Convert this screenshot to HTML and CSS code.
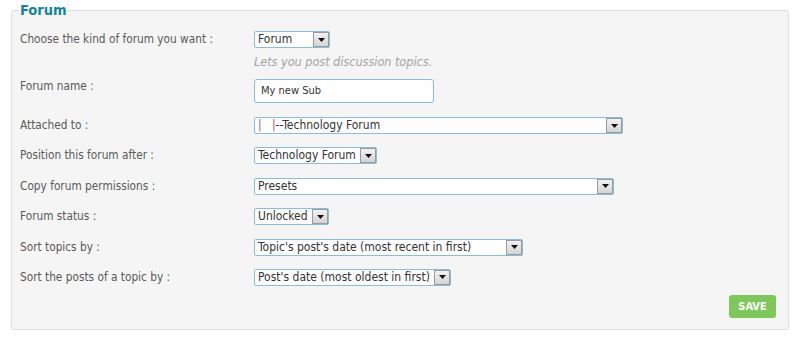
FILE: index.html
```html
<!DOCTYPE html>
<html>
<head>
<meta charset="utf-8">
<link rel="stylesheet" href="styles.css">
</head>
<body>
<form class="page">
  <fieldset class="box">
    <legend class="legend">Forum</legend>

    <div class="row row-first">
      <div class="label">Choose the kind of forum you want :</div>
      <div class="field">
        <div class="select w-type"><span class="val">Forum</span><span class="arrow"><svg width="7" height="4" viewBox="0 0 7 4"><path d="M0 0H7L3.5 4Z" fill="#111"/></svg></span></div>
        <div class="help">Lets you post discussion topics.</div>
      </div>
    </div>

    <div class="row row-input">
      <div class="label">Forum name :</div>
      <div class="field"><div class="input">My new Sub</div></div>
    </div>

    <div class="row">
      <div class="label">Attached to :</div>
      <div class="field"><div class="select w-attached"><span class="val"><span class="pipe">|</span>&nbsp;&nbsp;&nbsp;<span class="pipe">|</span>--Technology Forum</span><span class="arrow"><svg width="7" height="4" viewBox="0 0 7 4"><path d="M0 0H7L3.5 4Z" fill="#111"/></svg></span></div></div>
    </div>

    <div class="row">
      <div class="label">Position this forum after :</div>
      <div class="field"><div class="select w-pos"><span class="val">Technology Forum</span><span class="arrow"><svg width="7" height="4" viewBox="0 0 7 4"><path d="M0 0H7L3.5 4Z" fill="#111"/></svg></span></div></div>
    </div>

    <div class="row">
      <div class="label">Copy forum permissions :</div>
      <div class="field"><div class="select w-perm"><span class="val">Presets</span><span class="arrow"><svg width="7" height="4" viewBox="0 0 7 4"><path d="M0 0H7L3.5 4Z" fill="#111"/></svg></span></div></div>
    </div>

    <div class="row">
      <div class="label">Forum status :</div>
      <div class="field"><div class="select w-status"><span class="val">Unlocked</span><span class="arrow"><svg width="7" height="4" viewBox="0 0 7 4"><path d="M0 0H7L3.5 4Z" fill="#111"/></svg></span></div></div>
    </div>

    <div class="row">
      <div class="label">Sort topics by :</div>
      <div class="field"><div class="select w-sort"><span class="val">Topic's post's date (most recent in first)</span><span class="arrow"><svg width="7" height="4" viewBox="0 0 7 4"><path d="M0 0H7L3.5 4Z" fill="#111"/></svg></span></div></div>
    </div>

    <div class="row">
      <div class="label">Sort the posts of a topic by :</div>
      <div class="field"><div class="select w-posts"><span class="val">Post's date (most oldest in first)</span><span class="arrow"><svg width="7" height="4" viewBox="0 0 7 4"><path d="M0 0H7L3.5 4Z" fill="#111"/></svg></span></div></div>
    </div>

    <div class="actions">
      <button type="button" class="save">SAVE</button>
    </div>
  </fieldset>
</form>
</body>
</html>
```

FILE: styles.css
```css
html, body {
  margin: 0;
  padding: 0;
  background: #ffffff;
}

body {
  font-family: "DejaVu Sans Condensed", "DejaVu Sans", sans-serif;
  font-size: 11.75px;
  color: #555555;
}

.page {
  padding: 3px 11px 0 11px;
}

.box {
  margin: 0;
  width: 778px;
  box-sizing: border-box;
  height: 327px;
  border: 1px solid #dedede;
  border-radius: 3px;
  background: #f5f5f5;
  padding: 13px 12px 0 8px;
}

.legend {
  padding: 0 1px;
  margin-left: -1px;
  font-family: "DejaVu Sans Condensed", "DejaVu Sans", sans-serif;
  font-weight: bold;
  font-size: 14.5px;
  color: #12849f;
  line-height: 15px;
}

.row {
  display: flex;
  align-items: flex-start;
  margin-bottom: 13.4px;
}

.row-first {
  margin-bottom: 10px;
}

.row-input {
  margin-bottom: 14px;
}

.label {
  width: 234px;
  flex: none;
  line-height: 15px;
  padding-top: 1px;
  color: #5a5a5a;
}

.row-input .label {
  padding-top: 0;
}

.field {
  display: flex;
  flex-direction: column;
  align-items: flex-start;
}

.select {
  display: flex;
  align-items: stretch;
  height: 17px;
  box-sizing: border-box;
  border: 1px solid #86bfdc;
  border-radius: 2px;
  background: #ffffff;
  font-family: "DejaVu Sans Condensed", "DejaVu Sans", sans-serif;
  font-size: 12px;
  color: #333333;
}

.val {
  flex: 1;
  padding-left: 3px;
  line-height: 15px;
  white-space: nowrap;
  overflow: hidden;
}

.pipe {
  color: #b0506c;
}

.arrow {
  flex: none;
  width: 14px;
  display: flex;
  align-items: center;
  justify-content: center;
  border: 1px solid #9a9a9a;
  margin: 0;
  background: linear-gradient(#f2f2f2, #d4d4d4);
}

.w-type { width: 76px; }
.w-attached { width: 369px; }
.w-pos { width: 123px; }
.w-perm { width: 360px; }
.w-status { width: 75px; }
.w-sort { width: 269px; }
.w-posts { width: 197px; }

.help {
  margin-top: 6px;
  font-style: italic;
  font-size: 12.5px;
  color: #a3a3a3;
  line-height: 15px;
}

.input {
  width: 180px;
  height: 24px;
  box-sizing: border-box;
  border: 1px solid #86bfdc;
  border-radius: 3px;
  background: #ffffff;
  padding-left: 6px;
  line-height: 22px;
  font-size: 11px;
  color: #333333;
}

.actions {
  display: flex;
  justify-content: flex-end;
  margin-top: -4.4px;
}

.save {
  width: 47px;
  height: 23px;
  border: none;
  border-radius: 3px;
  background: #7ec85a;
  color: #ffffff;
  font-family: "DejaVu Sans Condensed", "DejaVu Sans", sans-serif;
  font-weight: bold;
  font-size: 11px;
  padding: 0;
}
```
